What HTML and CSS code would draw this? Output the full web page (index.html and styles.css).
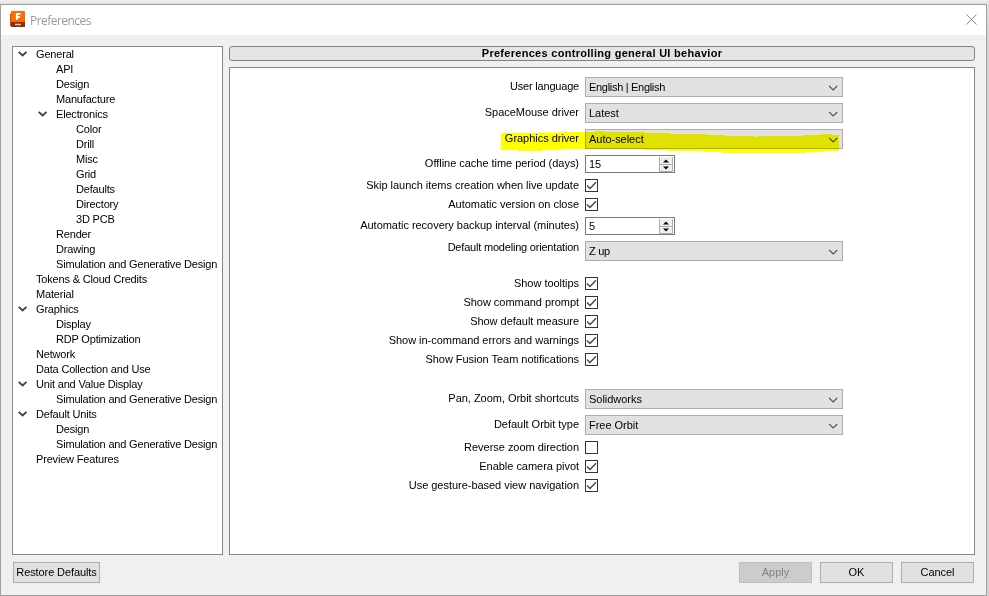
FILE: index.html
```html
<!DOCTYPE html>
<html lang="en">
<head>
    <meta charset="UTF-8">
    <meta name="viewport" content="width=device-width, initial-scale=1.0">
    <title>Preferences</title>
    <link rel="stylesheet" href="styles.css">
</head>
<body>
    <!-- shared glyphs -->
    <svg class="defs" width="0" height="0">
        <symbol id="arrow" viewBox="0 0 10 6"><path d="M1.200 1 L5.200 4.900 L9.200 1" fill="none" stroke="#505050" stroke-width="1.1"/></symbol>
        <symbol id="branch" viewBox="0 0 10 6"><path d="M.7 .8 L4.600 4.500 L8.500 .8" fill="none" stroke="#404040" stroke-width="1.8"/></symbol>
        <symbol id="check" viewBox="0 0 11 11"><path d="M1 5.500 L4 8.500 L10 2.200" fill="none" stroke="#404040" stroke-width="1.3"/></symbol>
        <symbol id="spin" viewBox="0 0 14 16">
            <path d="M0 1h14v15H0z" fill="#f0f0f0"/>
            <path d="M.5 1v14.500h13V1M0 8.500h14" fill="none" stroke="#adadad"/>
            <path d="M4 6.500h6L7 3.500zM4 10.500h6L7 13.500z" fill="#000"/>
        </symbol>
    </svg>
    <div class="window">
        <div class="titlebar">
            <svg class="logo" width="15" height="17" viewBox="0 0 15 17">
                <path d="M0 3 L2 1 V15 H0z" fill="#d6500a"/>
                <rect x="1" y="0" width="14" height="16" rx="1" fill="#ff6b00"/>
                <path d="M1 11h14v4q0 1-1 1H2q-1 0-1-1z" fill="#8a3208"/>
                <path d="M6.800 9V3H10.500M6.800 6H10" fill="none" stroke="#fff" stroke-width="1.800"/>
                <path d="M5 13.500h6" stroke="#e3c5b5" stroke-width="1.500"/>
            </svg>
            <span class="title">Preferences</span>
            <svg class="close" width="11" height="11" viewBox="0 0 11 11"><path d="M.5 .5l10 10M10.500 .5l-10 10" stroke="#888" fill="none"/></svg>
        </div>
        <div class="main">
            <ul class="tree">
                <li class="open"><svg><use href="#branch"/></svg>General</li>
                <li class="l2">API</li>
                <li class="l2">Design</li>
                <li class="l2">Manufacture</li>
                <li class="l2 open"><svg><use href="#branch"/></svg>Electronics</li>
                <li class="l3">Color</li>
                <li class="l3">Drill</li>
                <li class="l3">Misc</li>
                <li class="l3">Grid</li>
                <li class="l3">Defaults</li>
                <li class="l3">Directory</li>
                <li class="l3">3D PCB</li>
                <li class="l2">Render</li>
                <li class="l2">Drawing</li>
                <li class="l2">Simulation and Generative Design</li>
                <li>Tokens &amp; Cloud Credits</li>
                <li>Material</li>
                <li class="open"><svg><use href="#branch"/></svg>Graphics</li>
                <li class="l2">Display</li>
                <li class="l2">RDP Optimization</li>
                <li>Network</li>
                <li>Data Collection and Use</li>
                <li class="open"><svg><use href="#branch"/></svg>Unit and Value Display</li>
                <li class="l2">Simulation and Generative Design</li>
                <li class="open"><svg><use href="#branch"/></svg>Default Units</li>
                <li class="l2">Design</li>
                <li class="l2">Simulation and Generative Design</li>
                <li>Preview Features</li>
            </ul>
            <div class="content">
                <div class="heading">Preferences controlling general UI behavior</div>
                <div class="panel">
                    <div class="row tight"><label>User language</label><div class="select">English | English<svg><use href="#arrow"/></svg></div></div>
                    <div class="row"><label>SpaceMouse driver</label><div class="select">Latest<svg><use href="#arrow"/></svg></div></div>
                    <div class="row marked">
                        <label>Graphics driver</label><div class="select">Auto-select<svg><use href="#arrow"/></svg></div>
                        <!-- marker stroke over the row -->
                        <svg class="marker" width="338" height="22" viewBox="501 131 338 22">
                            <path fill="#ff0" d="M501 133H541V132.500H560V132H595V131.300H604V132H645V133H670V134H706V135H725V136H755V137H758V136H803V135H821V134H832V135H839V151H823V152H806V153H722V152H703V151H668V150H645V149H562V150H542V151H518V150H501z"/>
                        </svg>
                    </div>
                    <div class="row"><label>Offline cache time period (days)</label><div class="spinner">15<svg><use href="#spin"/></svg></div></div>
                    <div class="row"><label>Skip launch items creation when live update</label><div class="check"><svg><use href="#check"/></svg></div></div>
                    <div class="row"><label>Automatic version on close</label><div class="check"><svg><use href="#check"/></svg></div></div>
                    <div class="row"><label>Automatic recovery backup interval (minutes)</label><div class="spinner">5<svg><use href="#spin"/></svg></div></div>
                    <div class="row top tight"><label>Default modeling orientation</label><div class="select">Z up<svg><use href="#arrow"/></svg></div></div>
                    <div class="row group"><label>Show tooltips</label><div class="check"><svg><use href="#check"/></svg></div></div>
                    <div class="row"><label>Show command prompt</label><div class="check"><svg><use href="#check"/></svg></div></div>
                    <div class="row"><label>Show default measure</label><div class="check"><svg><use href="#check"/></svg></div></div>
                    <div class="row"><label>Show in-command errors and warnings</label><div class="check"><svg><use href="#check"/></svg></div></div>
                    <div class="row"><label>Show Fusion Team notifications</label><div class="check"><svg><use href="#check"/></svg></div></div>
                    <div class="row group-lg"><label>Pan, Zoom, Orbit shortcuts</label><div class="select">Solidworks<svg><use href="#arrow"/></svg></div></div>
                    <div class="row"><label>Default Orbit type</label><div class="select">Free Orbit<svg><use href="#arrow"/></svg></div></div>
                    <div class="row"><label>Reverse zoom direction</label><div class="check"></div></div>
                    <div class="row"><label>Enable camera pivot</label><div class="check"><svg><use href="#check"/></svg></div></div>
                    <div class="row"><label>Use gesture-based view navigation</label><div class="check"><svg><use href="#check"/></svg></div></div>
                </div>
            </div>
        </div>
        <div class="footer">
            <button class="restore">Restore Defaults</button>
            <button disabled>Apply</button>
            <button>OK</button>
            <button>Cancel</button>
        </div>
    </div>
</body>
</html>
```
FILE: styles.css
```css
* {
    box-sizing: border-box;
}
body {
    margin: 0;
    height: 596px;
    padding: 4px 2px 0 0;
    overflow: hidden;
    background: linear-gradient(#f0f0f0, #e2e2e2 4px, #d0d0d0 40px);
    font-family: "Liberation Sans", Arial, sans-serif;
    font-size: 11px;
    letter-spacing: -0.03px;
    color: #000;
}
svg {
    display: block;
    flex: none;
}
.defs {
    position: absolute;
}
.window {
    height: 592px;
    border: 1px solid #a0a0a0;
    background-color: #f0f0f0;
}
.titlebar {
    display: flex;
    align-items: center;
    height: 30px;
    padding: 0 10px 0 9px;
    background-color: #fff;
}
.logo {
    margin-top: -2px;
}
.close {
    margin: -2px -1px 0 0;
}
.title {
    flex: 1;
    margin-left: 5px;
    font-family: "Open Sans", "Noto Sans", sans-serif;
    font-size: 12px;
    letter-spacing: -0.55px;
    color: #999;
}
.main {
    display: flex;
    gap: 6px;
    height: 520px;
    padding: 11px 11px 0;
}
.tree {
    width: 211px;
    height: 509px;
    margin: 0;
    padding: 0 0 0 23px;
    border: 1px solid #828790;
    background-color: #fff;
    list-style: none;
    line-height: 15px;
    letter-spacing: -0.18px;
    white-space: nowrap;
}
.tree li {
    height: 15px;
}
.tree .l2 {
    padding-left: 20px;
}
.tree .l3 {
    padding-left: 40px;
}
.tree .open {
    display: flex;
    align-items: center;
}
.tree svg {
    width: 10px;
    height: 6px;
    margin: -2px 8px 0 -18px;
}
.content {
    display: flex;
    flex-direction: column;
    gap: 6px;
    width: 746px;
    height: 509px;
}
.heading {
    height: 15px;
    border: 1px solid #828282;
    border-radius: 3px;
    background-color: #e5e5e5;
    line-height: 13px;
    font-weight: bold;
    letter-spacing: 0.29px;
    text-align: center;
}
.panel {
    display: flex;
    flex-direction: column;
    gap: 6px;
    height: 488px;
    padding-top: 9px;
    border: 1px solid #828790;
    background-color: #fff;
}
.row {
    position: relative;
    display: flex;
    align-items: center;
    gap: 6px;
    white-space: nowrap;
}
.row label {
    width: 349px;
    line-height: 13px;
    text-align: right;
}
.row label:not(:has(+ .check)) {
    padding-bottom: 1px;
}
.row.tight {
    letter-spacing: -0.2px;
}
.row.tight .select {
    letter-spacing: -0.3px;
}
.row.top {
    align-items: flex-start;
}
.row.group {
    margin-top: 10px;
}
.row.group-lg {
    margin-top: 17px;
}
.select {
    display: flex;
    align-items: center;
    justify-content: space-between;
    width: 258px;
    height: 20px;
    padding: 0 4px 0 3px;
    border: 1px solid #adadad;
    background-color: #e1e1e1;
    line-height: 12px;
}
.select svg {
    width: 10px;
    height: 6px;
    margin-top: 2px;
}
.spinner {
    display: flex;
    align-items: center;
    justify-content: space-between;
    width: 90px;
    height: 18px;
    padding: 0 1px 0 3px;
    border: 1px solid #7a7a7a;
    line-height: 14px;
}
.spinner svg {
    width: 14px;
    height: 16px;
}
.check {
    width: 13px;
    height: 13px;
    border: 1px solid #333;
}
.check svg {
    width: 11px;
    height: 11px;
}
.marker {
    position: absolute;
    left: 271px;
    top: 2px;
    mix-blend-mode: multiply;
}
.footer {
    display: flex;
    gap: 8px;
    padding: 7px 12px 0;
}
.footer button {
    width: 73px;
    height: 21px;
    padding: 0 0 2px;
    border: 1px solid #adadad;
    background-color: #e1e1e1;
    font: inherit;
    letter-spacing: inherit;
    color: #000;
}
.footer button:disabled {
    border-color: #bfbfbf;
    background-color: #ccc;
    color: #838383;
}
.footer .restore {
    width: 87px;
    margin-right: auto;
    letter-spacing: -0.1px;
}
```
